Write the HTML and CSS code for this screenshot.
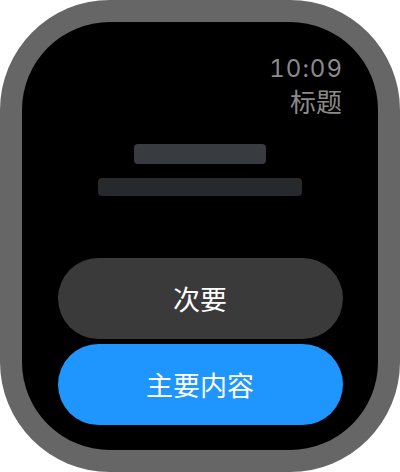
FILE: index.html
```html
<!DOCTYPE html>
<html>
<head>
    <title>Watch</title>
    <link rel="stylesheet" href="styles.css">
</head>
<body>
<div class="watch">
    <div class="screen">
        <header class="status">
            <div class="time">10:09</div>
            <div class="title">标题</div>
        </header>
        <div class="placeholder">
            <div class="bar bar-top"></div>
            <div class="bar bar-bottom"></div>
        </div>
        <div class="actions">
            <button type="button" class="btn btn-secondary">次要</button>
            <button type="button" class="btn btn-primary">主要内容</button>
        </div>
    </div>
</div>
</body>
</html>
```

FILE: styles.css
```css
body {
    margin: 0;
    background-color: #fff;
    font-family: Inter, "Noto Sans CJK SC", sans-serif;
}
.watch {
    width: 400px;
    height: 472px;
    box-sizing: border-box;
    padding: 22px;
    background-color: #666;
    border-radius: 110px;
}
.screen {
    height: 100%;
    display: flex;
    flex-direction: column;
    background-color: #000;
    border-radius: 88px;
    padding: 35px 0 25px;
    box-sizing: border-box;
}
.status {
    padding: 0 36px;
    text-align: right;
    color: #8a8a8a;
}
.time {
    font-size: 24px;
    line-height: 24px;
    font-variant-numeric: tabular-nums;
    letter-spacing: 1px;
    margin-right: -1px;
}
.title {
    margin-top: 7px;
    font-family: "Noto Sans CJK SC", sans-serif;
    font-size: 26px;
    line-height: 26px;
}
.placeholder {
    display: flex;
    flex-direction: column;
    align-items: center;
    gap: 14px;
    margin-top: 30px;
}
.bar {
    border-radius: 4px;
}
.bar-top {
    width: 132px;
    height: 20px;
    background-color: #383b3f;
}
.bar-bottom {
    width: 204px;
    height: 18px;
    background-color: #272a2d;
}
.actions {
    margin-top: auto;
    display: flex;
    flex-direction: column;
    align-items: center;
    gap: 5px;
}
.btn {
    width: 285px;
    height: 81px;
    border: none;
    border-radius: 41px;
    color: #fff;
    font-family: "Noto Sans CJK SC", sans-serif;
    font-size: 27px;
    padding: 0;
    cursor: pointer;
}
.btn-secondary {
    background-color: #3a3a3a;
}
.btn-primary {
    background-color: #1f95fe;
}
```
